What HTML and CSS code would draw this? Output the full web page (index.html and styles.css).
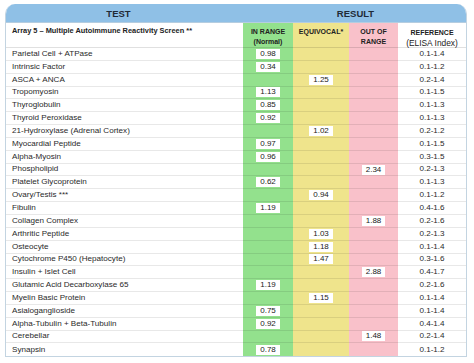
FILE: index.html
```html
<!DOCTYPE html>
<html>
<head>
<meta charset="utf-8">
<link rel="stylesheet" href="styles.css">
</head>
<body>
<div class="card">
  <div class="head">
    <div class="h-test">TEST</div>
    <div class="h-result">RESULT</div>
  </div>
  <div class="grid" id="grid">
    <div class="c test sub"><b>Array 5 – Multiple Autoimmune Reactivity Screen **</b></div>
    <div class="c g sub"><b>IN RANGE<br>(Normal)</b></div>
    <div class="c y sub"><b>EQUIVOCAL*</b></div>
    <div class="c p sub"><b>OUT OF<br>RANGE</b></div>
    <div class="c ref sub"><div><b>REFERENCE</b><br>(ELISA Index)</div></div>
  </div>
</div>
<script src="app.js"></script>
</body>
</html>
```
FILE: styles.css
```css
* { box-sizing: border-box; }
html, body { margin: 0; padding: 0; background: #fff; }
body { font-family: "Liberation Sans", Arial, sans-serif; color: #222; }
.card {
  margin: 4px 0 0 5px;
  width: 462px;
  border: 1px solid #c3d4e1;
  border-top: none;
  border-radius: 10px 10px 0 0;
  overflow: hidden;
}
.head {
  height: 19px;
  background: #8fc0e6;
  display: grid;
  grid-template-columns: 237px 1fr;
  align-items: center;
  font-weight: bold;
  font-size: 9.5px;
  color: #1f2a36;
  border-bottom: 1px solid #b5cde0;
}
.h-test { text-align: center; padding-right: 12px; }
.h-result { text-align: center; padding-left: 2px; }
.grid {
  display: grid;
  grid-template-columns: 237px 50px 56px 49px 1fr;
  grid-auto-rows: 12.85px;
  grid-template-rows: 25px;
}
.c {
  border-bottom: 1px solid rgba(0,0,0,0.09);
  font-size: 8.1px;
  display: flex;
  align-items: center;
  justify-content: center;
  line-height: 1;
}
.test { justify-content: flex-start; padding-left: 6px; color: #2a2a2a; }
.g { background: #93e18d; }
.y { background: #efe48c; }
.p { background: #f9c1ca; }
.ref { color: #2a2a2a; }
.sub {
  align-items: flex-start;
  padding-top: 4px;
  text-align: center;
  font-size: 7px;
  line-height: 10px;
  color: #222;
  border-bottom: 1px solid rgba(0,0,0,0.12);
}
.sub.test { font-size: 7.4px; padding-top: 3px; }
.sub.ref { font-size: 8.4px; }
.sub.ref b { font-size: 7px; }
.val {
  background: #fff;
  padding: 0 4px;
  height: 10px;
  line-height: 10px;
  font-size: 8px;
  min-width: 23px;
  text-align: center;
  color: #222;
}
.nb { border-bottom: none; }
```
FILE: app.js
```js
const rows = [
  ["Parietal Cell + ATPase", 0, "0.98", "0.1-1.4"],
  ["Intrinsic Factor", 0, "0.34", "0.1-1.2"],
  ["ASCA + ANCA", 1, "1.25", "0.2-1.4"],
  ["Tropomyosin", 0, "1.13", "0.1-1.5"],
  ["Thyroglobulin", 0, "0.85", "0.1-1.3"],
  ["Thyroid Peroxidase", 0, "0.92", "0.1-1.3"],
  ["21-Hydroxylase (Adrenal Cortex)", 1, "1.02", "0.2-1.2"],
  ["Myocardial Peptide", 0, "0.97", "0.1-1.5"],
  ["Alpha-Myosin", 0, "0.96", "0.3-1.5"],
  ["Phospholipid", 2, "2.34", "0.2-1.3"],
  ["Platelet Glycoprotein", 0, "0.62", "0.1-1.3"],
  ["Ovary/Testis ***", 1, "0.94", "0.1-1.2"],
  ["Fibulin", 0, "1.19", "0.4-1.6"],
  ["Collagen Complex", 2, "1.88", "0.2-1.6"],
  ["Arthritic Peptide", 1, "1.03", "0.2-1.3"],
  ["Osteocyte", 1, "1.18", "0.1-1.4"],
  ["Cytochrome P450 (Hepatocyte)", 1, "1.47", "0.3-1.6"],
  ["Insulin + Islet Cell", 2, "2.88", "0.4-1.7"],
  ["Glutamic Acid Decarboxylase 65", 0, "1.19", "0.2-1.6"],
  ["Myelin Basic Protein", 1, "1.15", "0.1-1.4"],
  ["Asialoganglioside", 0, "0.75", "0.1-1.4"],
  ["Alpha-Tubulin + Beta-Tubulin", 0, "0.92", "0.4-1.4"],
  ["Cerebellar", 2, "1.48", "0.2-1.4"],
  ["Synapsin", 0, "0.78", "0.1-1.2"]
];
const grid = document.getElementById("grid");
const cls = ["g", "y", "p"];
rows.forEach((r, i) => {
  const last = i === rows.length - 1 ? " nb" : "";
  let html = '<div class="c test' + last + '">' + r[0] + '</div>';
  cls.forEach((c, k) => {
    html += '<div class="c ' + c + last + '">' + (r[1] === k ? '<span class="val">' + r[2] + '</span>' : '') + '</div>';
  });
  html += '<div class="c ref' + last + '">' + r[3] + '</div>';
  grid.insertAdjacentHTML("beforeend", html);
});
```
